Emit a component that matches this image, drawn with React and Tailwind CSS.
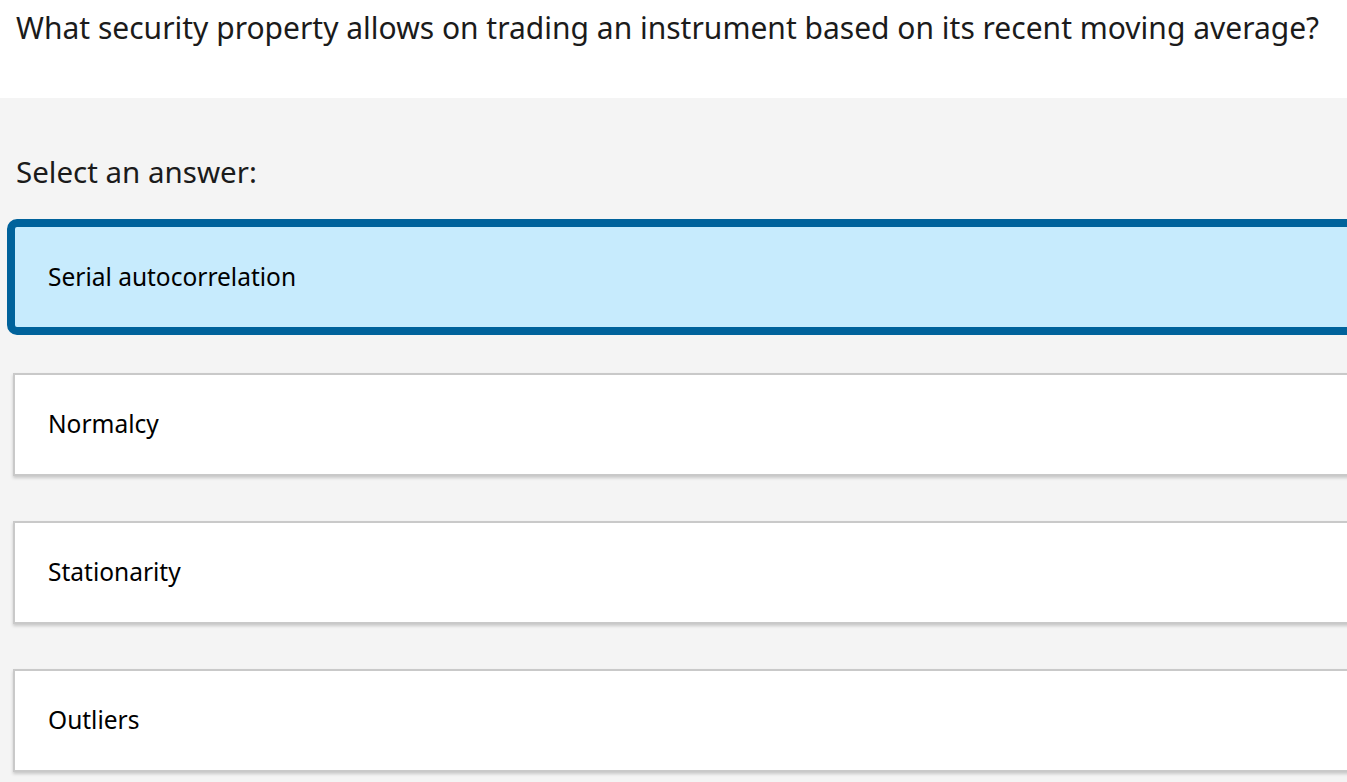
const OPTIONS = [
  { label: "Serial autocorrelation", selected: true },
  { label: "Normalcy" },
  { label: "Stationarity" },
  { label: "Outliers" },
];

export default function App() {
  return (
    <div
      className="w-[1347px] h-[782px] overflow-hidden bg-[#f4f4f4] text-[#1b1b1b]"
      style={{ fontFamily: '"Noto Sans", "Open Sans", sans-serif' }}
    >
      {/* Question */}
      <div className="h-[98px] bg-white pl-4 pt-[10px]">
        <h1 className="text-[30px] leading-[36px] whitespace-nowrap">
          What security property allows on trading an instrument based on its recent moving average?
        </h1>
      </div>

      {/* Answers */}
      <div className="pt-[56px]">
        <p className="pl-4 text-[29.5px] leading-[36px]">Select an answer:</p>
        <div className="w-[1400px] mt-[29px] flex flex-col">
          {OPTIONS.map((o, i) =>
            o.selected ? (
              <div
                key={o.label}
                className="ml-[7px] h-[116px] flex items-center pl-[33px] border-8 border-[#00629b] rounded-[10px] bg-[#c7ebfd] text-[24.5px] text-black"
              >
                {o.label}
              </div>
            ) : (
              <div
                key={o.label}
                className={`ml-[13px] h-[103px] flex items-center pl-[33px] border-2 border-[#c9c9c9] bg-white shadow-[0_2px_3px_rgba(0,0,0,0.18)] text-[24.5px] text-black ${
                  i === 1 ? "mt-[38px]" : "mt-[45px]"
                }`}
              >
                {o.label}
              </div>
            )
          )}
        </div>
      </div>
    </div>
  );
}
